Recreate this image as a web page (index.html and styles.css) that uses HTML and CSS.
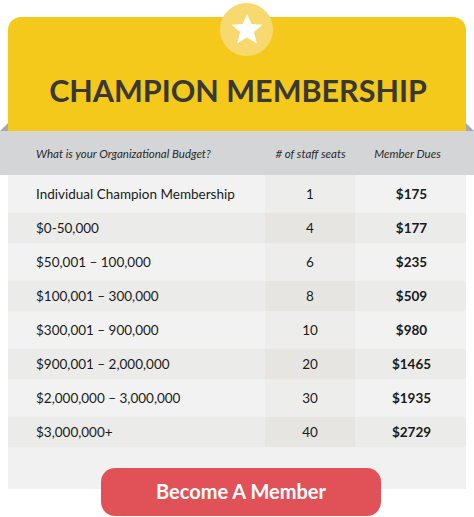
FILE: index.html
```html
<!DOCTYPE html>
<html>
<head>
<meta charset="utf-8">
<link rel="stylesheet" href="styles.css">
</head>
<body>
<div class="page">
  <div class="card">
    <div class="badge">
      <svg width="34" height="32" viewBox="0 0 34 32"><polygon fill="#fff" points="17,1 21.5,11 32.5,11.8 24,19 26.8,30.5 17,24.5 7.2,30.5 10,19 1.5,11.8 12.5,11"/></svg>
    </div>
    <h1 class="title">CHAMPION MEMBERSHIP</h1>
  </div>
  <div class="thead">
    <div class="c1">What is your Organizational Budget?</div>
    <div class="c2"># of staff seats</div>
    <div class="c3">Member Dues</div>
  </div>
  <div class="tbody">
    <div class="row light"><div class="c1">Individual Champion Membership</div><div class="c2">1</div><div class="c3">$175</div></div>
    <div class="row dark"><div class="c1">$0-50,000</div><div class="c2">4</div><div class="c3">$177</div></div>
    <div class="row light"><div class="c1">$50,001 – 100,000</div><div class="c2">6</div><div class="c3">$235</div></div>
    <div class="row dark"><div class="c1">$100,001 – 300,000</div><div class="c2">8</div><div class="c3">$509</div></div>
    <div class="row light"><div class="c1">$300,001 – 900,000</div><div class="c2">10</div><div class="c3">$980</div></div>
    <div class="row dark"><div class="c1">$900,001 – 2,000,000</div><div class="c2">20</div><div class="c3">$1465</div></div>
    <div class="row light"><div class="c1">$2,000,000 – 3,000,000</div><div class="c2">30</div><div class="c3">$1935</div></div>
    <div class="row dark"><div class="c1">$3,000,000+</div><div class="c2">40</div><div class="c3">$2729</div></div>
    <div class="spacer"></div>
  </div>
  <div class="cta"><a class="btn">Become A Member</a></div>
</div>
</body>
</html>
```
FILE: styles.css
```css
html, body { margin: 0; padding: 0; background: #fff; }
body { font-family: Lato, "Noto Sans", sans-serif; color: #222; width: 474px; height: 517px; overflow: hidden; }
.page { display: flex; flex-direction: column; padding-top: 17px; }
.card {
  position: relative;
  margin: 0 8px;
  height: 114px;
  background: #f4c91b;
  border-radius: 13px 13px 0 0;
  display: flex;
  align-items: flex-end;
  justify-content: center;
}
.badge {
  position: absolute;
  left: 212px;
  top: -14px;
  width: 53px;
  height: 53px;
  border-radius: 50%;
  background: #f8d96f;
  display: flex;
  align-items: center;
  justify-content: center;
}
.badge svg { margin-top: -1px; margin-left: 1px; }
.title {
  margin: 0 0 22px 2px;
  font-size: 30.5px;
  font-weight: 700;
  color: #393835;
  line-height: 38px;
}
.thead {
  position: relative;
  height: 44px;
  background: #d4d5d7;
  display: grid;
  grid-template-columns: 265px 90px 119px;
  align-items: center;
  font-style: italic;
  font-size: 11.5px;
  color: #2a2a2a;
}
.thead::before, .thead::after {
  content: "";
  position: absolute;
  top: -8px;
  width: 0; height: 0;
  border-bottom: 8px solid #a8a9ab;
}
.thead::before { left: 0; border-left: 8px solid transparent; }
.thead::after { right: 0; border-right: 8px solid transparent; }
.thead .c1 { padding-left: 36px; }
.thead .c2 { text-align: center; padding-left: 1px; }
.thead .c3 { text-align: center; padding-right: 14px; }
.tbody { margin: 0 8px; background: #f1f1f1; }
.row {
  display: grid;
  grid-template-columns: 257px 90px 111px;
  align-items: center;
  font-size: 13.5px;
  color: #1a1a1a;
}
.row.light { height: 38px; background: #f2f2f2; }
.row.dark { height: 30px; background: #ebebea; }
.row.light .c2 { background: #ededeb; }
.row.dark .c2 { background: #e6e5e2; }
.row .c1 { padding-left: 28px; }
.row .c2 { height: 100%; display: flex; align-items: center; justify-content: center; }
.row .c3 { text-align: center; font-weight: 700; padding-left: 2px; }
.spacer { height: 42px; }
.cta { display: flex; justify-content: center; margin-top: -21px; padding-left: 8px; }
.btn {
  width: 280px;
  height: 48px;
  border-radius: 14px;
  background: #e15258;
  color: #fff;
  font-weight: 700;
  font-size: 20px;
  display: flex;
  align-items: center;
  justify-content: center;
  padding-bottom: 2px;
  box-sizing: border-box;
}
```
